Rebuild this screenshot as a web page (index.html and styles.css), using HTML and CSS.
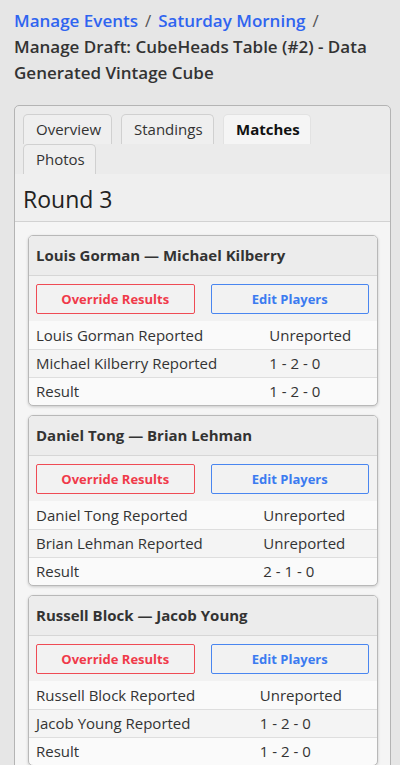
FILE: index.html
```html
<!DOCTYPE html>
<html>
<head>
<meta charset="utf-8">
<link rel="stylesheet" href="styles.css">
</head>
<body>
<div class="page">
  <h1 class="crumbs">
    <a href="#">Manage Events</a><span class="sep">/</span><a href="#">Saturday Morning</a><span class="sep">/</span>
    <span class="current">Manage Draft: CubeHeads Table (#2) - Data Generated Vintage Cube</span>
  </h1>
  <div class="panel">
    <div class="tabs">
      <div class="tab">Overview</div>
      <div class="tab">Standings</div>
      <div class="tab active">Matches</div>
      <div class="tab">Photos</div>
    </div>
    <div class="round-head"><h2>Round 3</h2></div>
    <div class="panel-body">
      <div class="card">
        <div class="card-head">Louis Gorman — Michael Kilberry</div>
        <div class="actions">
          <button class="btn red">Override Results</button>
          <button class="btn blue">Edit Players</button>
        </div>
        <table>
          <tr><td>Louis Gorman Reported</td><td>Unreported</td></tr>
          <tr><td>Michael Kilberry Reported</td><td>1 - 2 - 0</td></tr>
          <tr><td>Result</td><td>1 - 2 - 0</td></tr>
        </table>
      </div>
      <div class="card">
        <div class="card-head">Daniel Tong — Brian Lehman</div>
        <div class="actions">
          <button class="btn red">Override Results</button>
          <button class="btn blue">Edit Players</button>
        </div>
        <table>
          <tr><td>Daniel Tong Reported</td><td>Unreported</td></tr>
          <tr><td>Brian Lehman Reported</td><td>Unreported</td></tr>
          <tr><td>Result</td><td>2 - 1 - 0</td></tr>
        </table>
      </div>
      <div class="card">
        <div class="card-head">Russell Block — Jacob Young</div>
        <div class="actions">
          <button class="btn red">Override Results</button>
          <button class="btn blue">Edit Players</button>
        </div>
        <table>
          <tr><td>Russell Block Reported</td><td>Unreported</td></tr>
          <tr><td>Jacob Young Reported</td><td>1 - 2 - 0</td></tr>
          <tr><td>Result</td><td>1 - 2 - 0</td></tr>
        </table>
      </div>
    </div>
  </div>
</div>
</body>
</html>
```
FILE: styles.css
```css
* { box-sizing: border-box; }
html, body { margin: 0; padding: 0; }
body {
  background: #e6e6e6;
  font-family: "Open Sans", "Noto Sans", sans-serif;
  color: #333;
  overflow: hidden;
  height: 765px;
}
.page { padding: 8px 10px 0 14px; }
.crumbs {
  margin: 0 0 19px 0;
  font-size: 17px;
  line-height: 26px;
  font-weight: 600;
  color: #333;
}
.crumbs a { color: #2f64f0; text-decoration: none; }
.crumbs .sep { color: #555; margin: 0 7px; font-weight: 400; }
.panel {
  border: 1px solid #b4b4b4;
  border-radius: 5px;
  background: #ebebeb;
  overflow: hidden;
  width: 377px;
}
.tabs {
  display: flex;
  flex-wrap: wrap;
  gap: 0 9px;
  padding: 8px 8px 0 8px;
}
.tab {
  font-size: 15px;
  line-height: 29px;
  height: 30px;
  padding: 0 12px;
  border: 1px solid #d0d0d0;
  border-bottom: none;
  border-radius: 5px 5px 0 0;
  background: #efefef;
  color: #333;
}
.tab:nth-child(1) { width: 89px; }
.tab:nth-child(2) { width: 93px; }
.tab:nth-child(3) { width: 88px; }
.tab:nth-child(4) { width: 73px; }
.tab.active {
  background: #f5f5f5;
  font-weight: 700;
  color: #111;
  border-color: #e2e2e2;
}
.round-head {
  background: #efefef;
  border-bottom: 1px solid #d2d2d2;
  padding: 8px 8px 0 8px;
  height: 48px;
}
.round-head h2 {
  margin: 0;
  font-size: 23px;
  line-height: 34px;
  font-weight: 400;
  color: #222;
}
.panel-body {
  background: #f5f5f5;
  padding: 13px 12px 20px 13px;
}
.card {
  border: 1px solid #b8b8b8;
  border-radius: 5px;
  background: #fafafa;
  box-shadow: 0 1px 3px rgba(0,0,0,0.18);
  overflow: hidden;
  margin-bottom: 9px;
}
.card-head {
  background: #ececec;
  border-bottom: 1px solid #d6d6d6;
  height: 40px;
  padding: 0 7px;
  font-size: 15px;
  font-weight: 700;
  line-height: 39px;
  color: #333;
}
.actions {
  display: flex;
  gap: 16px;
  padding: 8px 8px 7px 7px;
  background: #f2f2f2;
}
.btn {
  flex: 1;
  height: 30px;
  background: transparent;
  border: 1px solid;
  border-radius: 2px;
  font-family: inherit;
  font-size: 13px;
  font-weight: 700;
  padding: 0;
}
.btn.red { color: #f03a4a; border-color: #ef4b55; }
.btn.blue { color: #3b7bf0; border-color: #4a86f0; }
table {
  width: 100%;
  border-collapse: collapse;
  font-size: 15px;
  color: #333;
}
td {
  padding: 0 7px;
  height: 28px;
  line-height: 20px;
}
tr + tr td { border-top: 1px solid #dedede; }
tr:nth-child(even) td { background: #f4f4f4; }
```
